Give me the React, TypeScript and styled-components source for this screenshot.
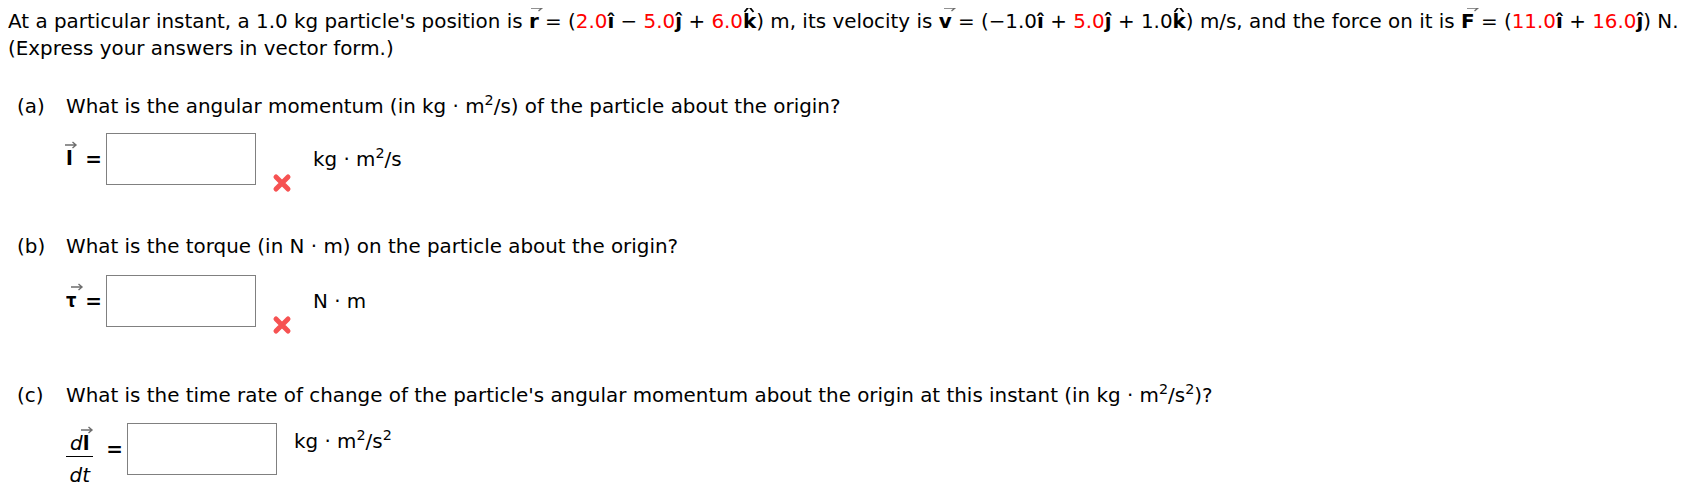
import React from "react";
import styled, { createGlobalStyle } from "styled-components";

const GlobalStyle = createGlobalStyle`
  body {
    margin: 8px;
    background: #ffffff;
    color: #000000;
    font-family: "DejaVu Sans", Verdana, sans-serif;
    font-size: 19.9px;
  }
`;

const Intro = styled.div`
  line-height: 27px;
`;

const Red = styled.span`
  color: #ff0000;
`;

const Bold = styled.b`
  font-weight: 700;
`;

const VecWrap = styled.span`
  position: relative;
  display: inline-block;
  font-weight: 700;
  line-height: 1;
`;

const ArrowMark = styled.svg`
  position: absolute;
  display: block;
  overflow: visible;
  top: -8px;
  right: -4px;
  z-index: 1;
`;

const HatWrap = styled.span`
  position: relative;
  display: inline-block;
  font-weight: 700;
  line-height: 1;
`;

const HatMark = styled.svg`
  position: absolute;
  display: block;
  overflow: visible;
  top: -7px;
  left: 0px;
  z-index: 1;
`;

const Part = styled.div<{ $top: number }>`
  display: flex;
  padding-left: 9px;
  margin-top: ${(p) => p.$top}px;
`;

const PartLabel = styled.div`
  width: 49px;
  flex-shrink: 0;
  line-height: 24px;
`;

const PartBody = styled.div`
  display: flex;
  flex-direction: column;
`;

const Question = styled.div`
  line-height: 24px;
`;

const AnswerRow = styled.div<{ $gap: number }>`
  display: flex;
  align-items: flex-start;
  margin-top: ${(p) => p.$gap}px;
`;

const Symbol = styled.div`
  display: flex;
  align-items: center;
  height: 52px;
  width: 40px;
  flex-shrink: 0;
`;

const Tau = styled.span`
  display: inline-block;
  transform: scaleX(0.82);
  transform-origin: left center;
`;

const Equals = styled.span`
  font-weight: 700;
  height: 52px;
  margin-left: auto;
  margin-right: 4px;
  display: flex;
  align-items: center;
`;

const AnswerBox = styled.input`
  box-sizing: border-box;
  width: 150px;
  height: 52px;
  border: 1px solid #808080;
  margin: 0;
  padding: 0 6px;
  font: inherit;
`;

const WrongMark = styled.svg`
  margin-top: 40px;
  margin-left: 16px;
  flex-shrink: 0;
`;

const UnitText = styled.div<{ $left: number; $lift?: number }>`
  margin-left: ${(p) => p.$left}px;
  margin-top: ${(p) => -(p.$lift ?? 0)}px;
  height: 52px;
  display: flex;
  align-items: center;
`;

const Sup = styled.sup`
  font-size: 0.72em;
  line-height: 0;
  vertical-align: 0.55em;
`;

const Fraction = styled.div`
  display: flex;
  flex-direction: column;
  align-items: center;
  margin-top: 9px;
`;

const Numer = styled.div`
  padding: 0 4px;
  border-bottom: 1px solid #000;
  line-height: 24px;
`;

const Denom = styled.div`
  padding-top: 7px;
  line-height: 24px;
  font-style: italic;
`;

const Ital = styled.i`
  font-style: italic;
`;

const FracRow = styled.div`
  display: flex;
  align-items: flex-start;
  width: 61px;
  flex-shrink: 0;
`;

const Arrow = () => (
  <ArrowMark width="12" height="8" viewBox="0 0 12 8">
    <path d="M0 4 H11 M7.5 1 L11 4 L7.5 7" stroke="#6e6e6e" strokeWidth="1.4" fill="none" />
  </ArrowMark>
);

const Vec = ({ children }: { children: React.ReactNode }) => (
  <VecWrap>
    {children}
    <Arrow />
  </VecWrap>
);

const KHat = () => (
  <HatWrap>
    k
    <HatMark width="12" height="8" viewBox="0 0 12 8">
      <path d="M1.5 7 L6 1.5 L10.5 7" stroke="#000000" strokeWidth="1.8" fill="none" />
    </HatMark>
  </HatWrap>
);

const Cross = () => (
  <WrongMark width="20" height="20" viewBox="0 0 20 20">
    <path d="M4 4 L16 16 M16 4 L4 16" stroke="#f65252" strokeWidth="5" strokeLinecap="round" />
  </WrongMark>
);

export default function App() {
  return (
    <>
      <GlobalStyle />
      <Intro>
        At a particular instant, a 1.0 kg particle's position is <Vec>r</Vec> = (<Red>2.0</Red>
        <Bold>î</Bold> − <Red>5.0</Red>
        <Bold>ĵ</Bold> + <Red>6.0</Red>
        <KHat />) m, its velocity is <Vec>v</Vec> = (−1.0<Bold>î</Bold> + <Red>5.0</Red>
        <Bold>ĵ</Bold> + 1.0
        <KHat />) m/s, and the force on it is <Vec>F</Vec> = (<Red>11.0</Red>
        <Bold>î</Bold> + <Red>16.0</Red>
        <Bold>ĵ</Bold>) N.
        <br />
        (Express your answers in vector form.)
      </Intro>

      <Part $top={33}>
        <PartLabel>(a)</PartLabel>
        <PartBody>
          <Question>
            What is the angular momentum (in kg · m<Sup>2</Sup>/s) of the particle about the origin?
          </Question>
          <AnswerRow $gap={14}>
            <Symbol>
              <Vec>l</Vec>
              <Equals>=</Equals>
            </Symbol>
            <AnswerBox />
            <Cross />
            <UnitText $left={21}>
              <span>
                kg · m<Sup>2</Sup>/s
              </span>
            </UnitText>
          </AnswerRow>
        </PartBody>
      </Part>

      <Part $top={42}>
        <PartLabel>(b)</PartLabel>
        <PartBody>
          <Question>What is the torque (in N · m) on the particle about the origin?</Question>
          <AnswerRow $gap={16}>
            <Symbol>
              <Vec>
                <Tau>τ</Tau>
              </Vec>
              <Equals>=</Equals>
            </Symbol>
            <AnswerBox />
            <Cross />
            <UnitText $left={21}>N · m</UnitText>
          </AnswerRow>
        </PartBody>
      </Part>

      <Part $top={49}>
        <PartLabel>(c)</PartLabel>
        <PartBody>
          <Question>
            What is the time rate of change of the particle's angular momentum about the origin at this
            instant (in kg · m<Sup>2</Sup>/s<Sup>2</Sup>)?
          </Question>
          <AnswerRow $gap={15}>
            <FracRow>
              <Fraction>
                <Numer>
                  <Ital>d</Ital>
                  <Vec>l</Vec>
                </Numer>
                <Denom>dt</Denom>
              </Fraction>
              <Equals>=</Equals>
            </FracRow>
            <AnswerBox />
            <UnitText $left={17} $lift={8}>
              <span>
                kg · m<Sup>2</Sup>/s<Sup>2</Sup>
              </span>
            </UnitText>
          </AnswerRow>
        </PartBody>
      </Part>
    </>
  );
}
